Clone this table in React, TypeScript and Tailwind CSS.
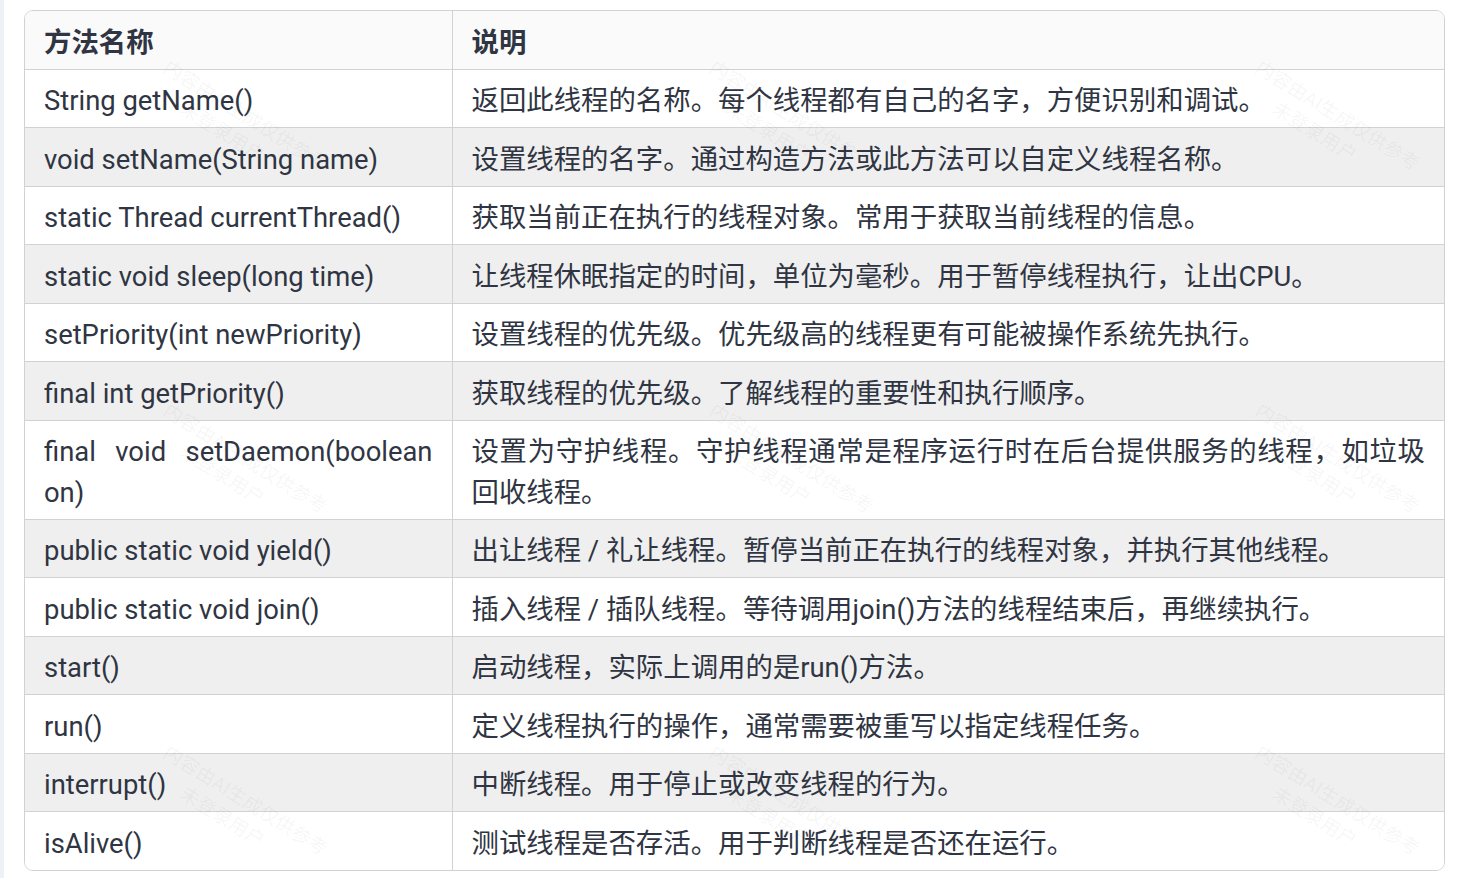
const rows: [string, string][] = [
  ['String getName()', '返回此线程的名称。每个线程都有自己的名字，方便识别和调试。'],
  ['void setName(String name)', '设置线程的名字。通过构造方法或此方法可以自定义线程名称。'],
  ['static Thread currentThread()', '获取当前正在执行的线程对象。常用于获取当前线程的信息。'],
  ['static void sleep(long time)', '让线程休眠指定的时间，单位为毫秒。用于暂停线程执行，让出CPU。'],
  ['setPriority(int newPriority)', '设置线程的优先级。优先级高的线程更有可能被操作系统先执行。'],
  ['final int getPriority()', '获取线程的优先级。了解线程的重要性和执行顺序。'],
  ['final void setDaemon(boolean on)', '设置为守护线程。守护线程通常是程序运行时在后台提供服务的线程，如垃圾回收线程。'],
  ['public static void yield()', '出让线程 / 礼让线程。暂停当前正在执行的线程对象，并执行其他线程。'],
  ['public static void join()', '插入线程 / 插队线程。等待调用join()方法的线程结束后，再继续执行。'],
  ['start()', '启动线程，实际上调用的是run()方法。'],
  ['run()', '定义线程执行的操作，通常需要被重写以指定线程任务。'],
  ['interrupt()', '中断线程。用于停止或改变线程的行为。'],
  ['isAlive()', '测试线程是否存活。用于判断线程是否还在运行。'],
];

const marks = [
  { left: 172, top: 55 },
  { left: 718, top: 55 },
  { left: 1264, top: 55 },
  { left: 172, top: 398 },
  { left: 718, top: 398 },
  { left: 1264, top: 398 },
  { left: 172, top: 740 },
  { left: 718, top: 740 },
  { left: 1264, top: 740 },
];

function Watermark({ left, top }: { left: number; top: number }) {
  return (
    <div
      className="pointer-events-none absolute origin-top-left rotate-[32deg] whitespace-nowrap text-[19px] leading-[26px] text-black/[0.05]"
      style={{ left, top }}
    >
      <div>内容由AI生成仅供参考</div>
      <div className="pl-[36px]">未登录用户</div>
    </div>
  );
}

export default function App() {
  return (
    <div
      className="flex min-h-[878px] bg-white text-[#2f3542]"
      style={{ fontFamily: 'Roboto, "Noto Sans CJK SC", sans-serif' }}
    >
      <div className="w-[4px] shrink-0 bg-[#eef1f5]" />
      <div className="relative ml-[20px] mt-[10px] w-[1421px]">
        <div className="overflow-hidden rounded-[9px] border border-[#d2d2d2]">
          <table className="w-full border-collapse text-[27.4px] leading-[40.5px]">
            <colgroup>
              <col className="w-[427px]" />
              <col />
            </colgroup>
            <thead>
              <tr className="bg-[#fafafa]">
                <th className="px-[19px] pt-[11.5px] pb-[5.5px] text-left font-bold">方法名称</th>
                <th className="border-l border-[#d2d2d2] px-[19px] pt-[11.5px] pb-[5.5px] text-left font-bold">
                  说明
                </th>
              </tr>
            </thead>
            <tbody>
              {rows.map(([name, desc], i) => (
                <tr key={name} className={i % 2 === 1 ? 'bg-[#efefef]' : 'bg-white'}>
                  <td className="border-t border-[#d2d2d2] px-[19px] pt-[11.5px] pb-[5.5px] text-justify align-middle">
                    {name}
                  </td>
                  <td className="border-t border-l border-[#d2d2d2] px-[19px] pt-[11.5px] pb-[5.5px] text-justify align-middle">
                    {desc}
                  </td>
                </tr>
              ))}
            </tbody>
          </table>
        </div>
        {marks.map((m) => (
          <Watermark key={`${m.left}-${m.top}`} left={m.left - 24} top={m.top - 10} />
        ))}
      </div>
    </div>
  );
}
